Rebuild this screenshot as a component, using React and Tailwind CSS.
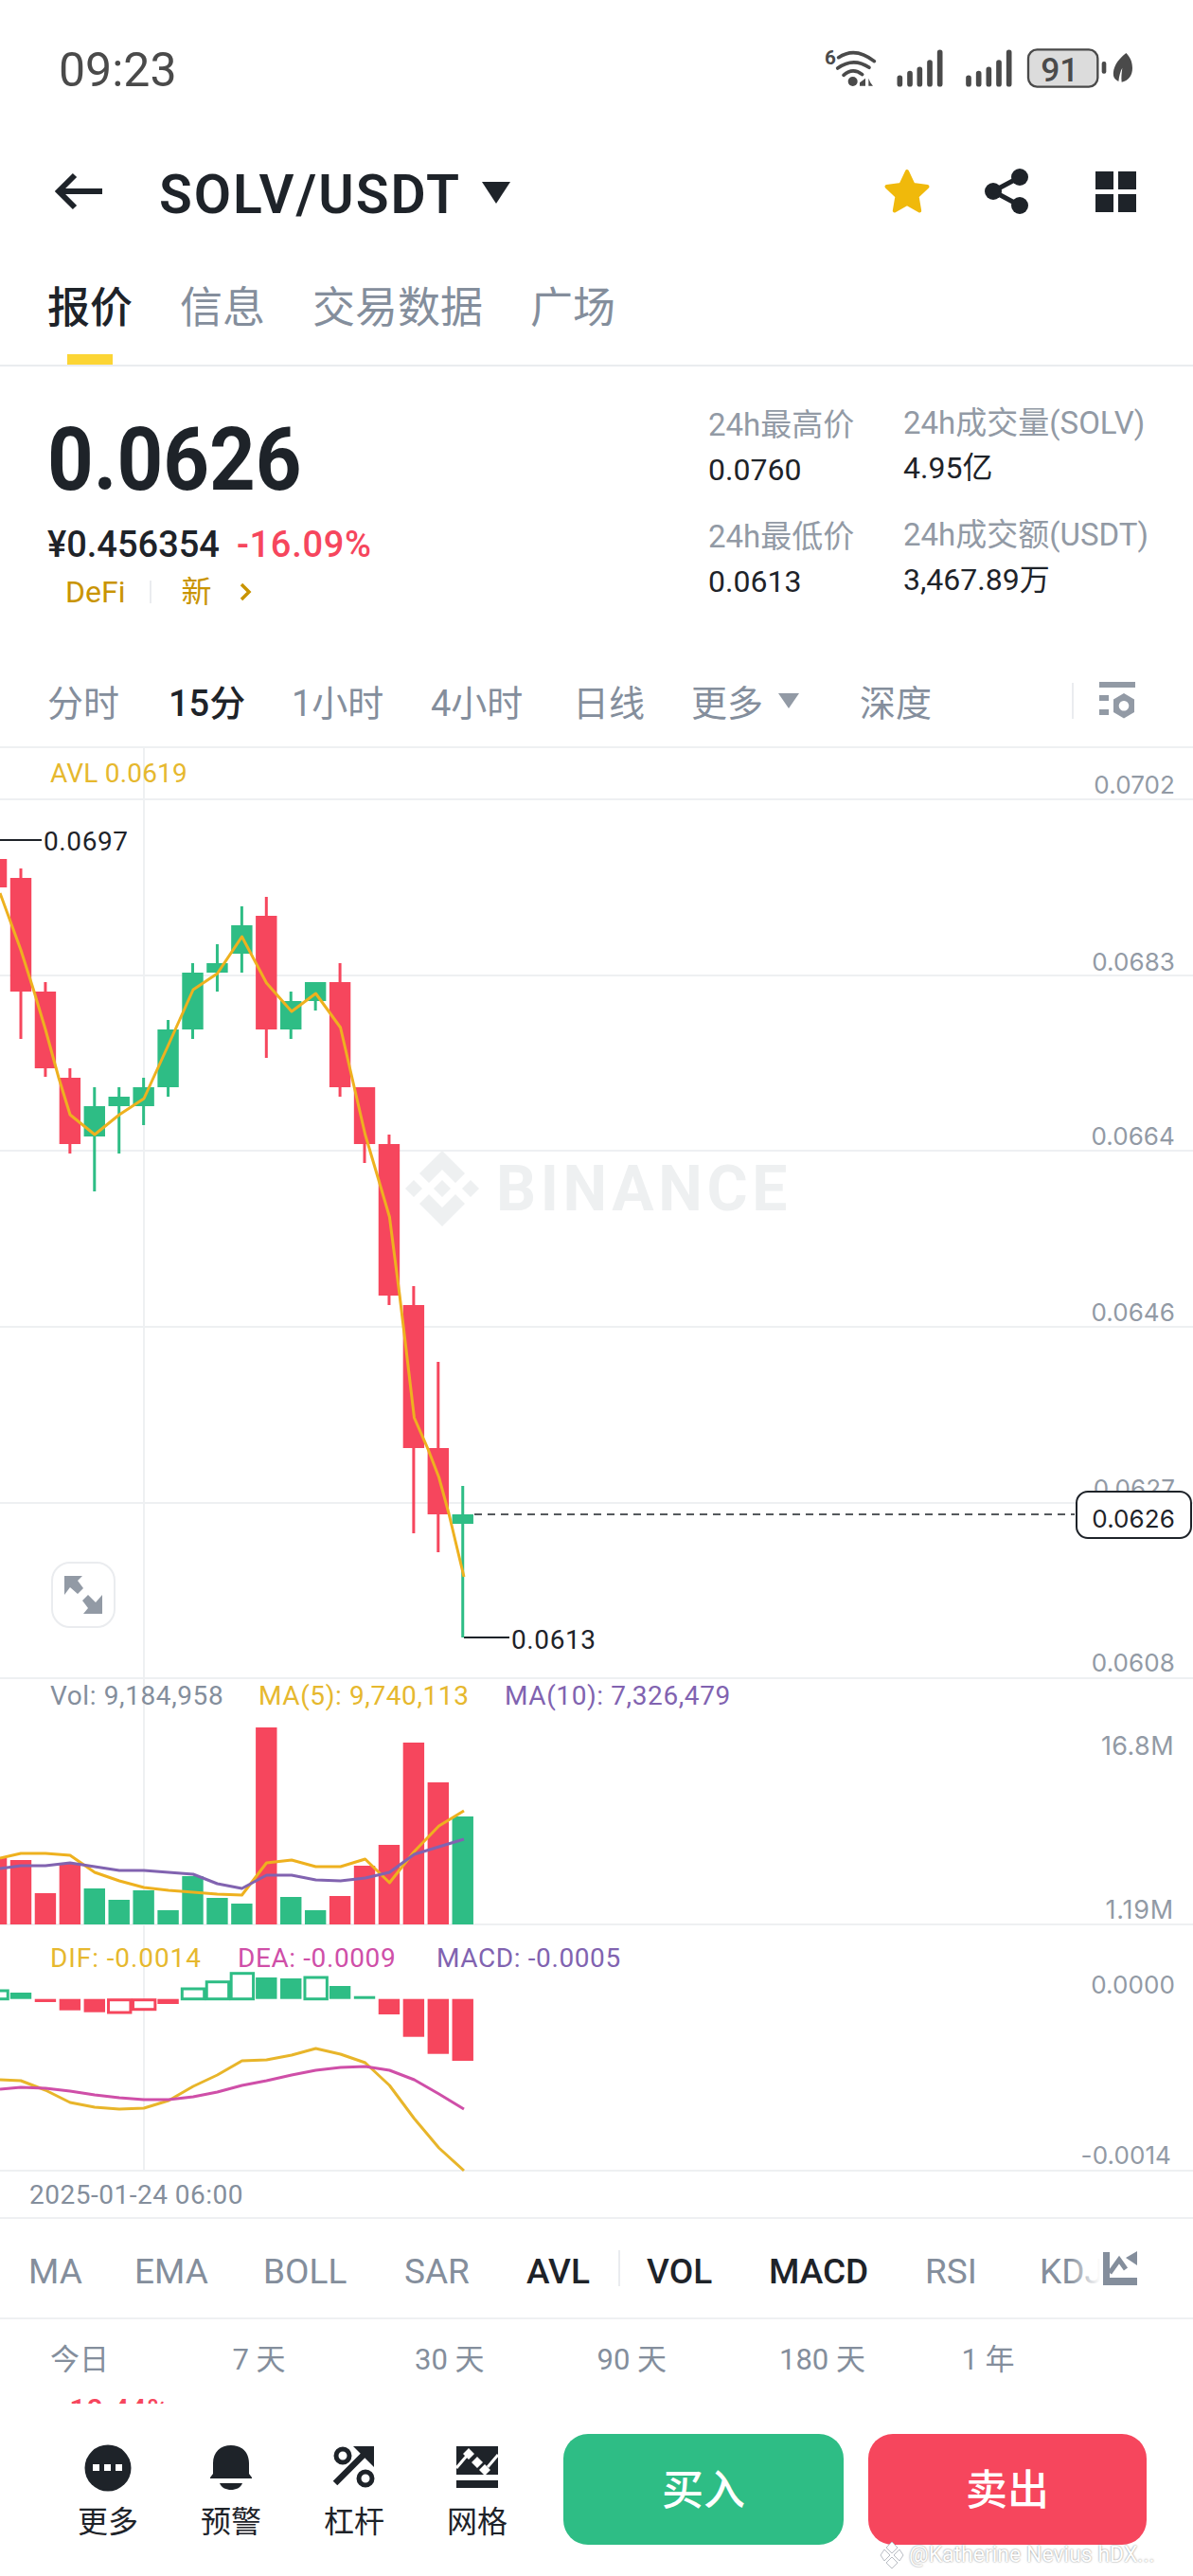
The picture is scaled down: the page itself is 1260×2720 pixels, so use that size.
import React from "react";

const RED = "#f6465d";
const GREEN = "#2ebd85";
const X = (i) => 22 + 25.93 * i;

const candles = [
  [-1, "r", 887, 907, 937, 937],
  [0, "r", 917, 927, 1047, 1097],
  [1, "r", 1037, 1047, 1128, 1137],
  [2, "r", 1128, 1138, 1208, 1218],
  [3, "g", 1148, 1168, 1200, 1258],
  [4, "g", 1148, 1158, 1168, 1218],
  [5, "g", 1138, 1148, 1168, 1188],
  [6, "g", 1077, 1087, 1148, 1158],
  [7, "g", 1017, 1027, 1087, 1097],
  [8, "g", 997, 1017, 1027, 1047],
  [9, "g", 957, 977, 1007, 1027],
  [10, "r", 947, 967, 1087, 1117],
  [11, "g", 1047, 1057, 1087, 1097],
  [12, "g", 1037, 1037, 1057, 1067],
  [13, "r", 1017, 1037, 1148, 1158],
  [14, "r", 1148, 1148, 1208, 1228],
  [15, "r", 1198, 1208, 1368, 1378],
  [16, "r", 1358, 1378, 1529, 1619],
  [17, "r", 1438, 1529, 1599, 1639],
  [18, "g", 1569, 1599, 1609, 1729],
];

const avl = "0,943 22,1003 36,1047 48,1087 62,1138 74,1177 100,1198 126,1177 152,1160 178,1103 204,1045 229.5,1028 255.5,989 281.5,1038 308,1068 333.5,1049 359.6,1085 385.7,1198 402,1253 411.4,1285 422,1367 428,1417 437.5,1497 452,1530 463.6,1560 474,1598 490,1665";

const vols = [
  [-1, "r", 1962], [0, "r", 1964], [1, "r", 1999], [2, "r", 1968], [3, "g", 1994],
  [4, "g", 2006], [5, "g", 1996], [6, "g", 2017], [7, "g", 1981], [8, "g", 2004],
  [9, "g", 2010], [10, "r", 1824], [11, "g", 2003], [12, "g", 2017], [13, "r", 2002],
  [14, "r", 1970], [15, "r", 1948], [16, "r", 1840], [17, "r", 1882], [18, "g", 1918],
];

const ma5 = "0,1962 22,1957 48,1957 74,1959 100,1977 126,1986 152,1993 178,1996 204,1998 229.5,2000 255.5,2001 281.5,1967 308,1964 333.5,1971 359.6,1971 385.7,1963 411.4,1988 437.5,1955 463.6,1928 490,1912";
const ma10 = "0,1973 22,1970 48,1970 74,1967 100,1971 126,1975 152,1975 178,1977 204,1979 229.5,1989 255.5,1994 281.5,1980 308,1980 333.5,1985 359.6,1986 385.7,1983 411.4,1977 437.5,1958 463.6,1950 490,1942";
const dif = "0,2196 22,2197 48,2207 74,2220 100,2225 126,2227 152,2226 178,2218 204,2203 229.5,2191 255.5,2176 281.5,2175 308,2170 333.5,2163 359.6,2169 385.7,2178 411.4,2202 437.5,2237 463.6,2268 490,2292";
const dea = "0,2206 22,2204 48,2205 74,2208 100,2212 126,2215 152,2217 178,2217 204,2214 229.5,2209 255.5,2202 281.5,2197 308,2191 333.5,2186 359.6,2183 385.7,2182 411.4,2186 437.5,2196 463.6,2211 490,2227";

const BASE = 2110.7;
const macd = [
  [-1, "g", 2101, true], [0, "g", 2104, false], [1, "r", 2114, false], [2, "r", 2122.7, false],
  [3, "r", 2124.7, false], [4, "r", 2125, true], [5, "r", 2121.7, true], [6, "r", 2116, false],
  [7, "g", 2099, true], [8, "g", 2091.7, true], [9, "g", 2082.7, true], [10, "g", 2088, false],
  [11, "g", 2089, false], [12, "g", 2087, true], [13, "g", 2097, false], [14, "g", 2107.7, false],
  [15, "r", 2127, false], [16, "r", 2150.7, false], [17, "r", 2168.7, false], [18, "r", 2176, false],
];

const axis = [
  ["0.0702", 838], ["0.0683", 1025], ["0.0664", 1209], ["0.0646", 1395], ["0.0627", 1581],
  ["0.0608", 1765], ["0.0000", 2105],
];

const Chart = () => (
  <svg className="absolute inset-0 h-full w-full" viewBox="0 788 1260 1553">
    {[844, 1030, 1215, 1401, 1587, 1772, 2032, 2292].map((y) => (
      <line key={y} x1="0" x2="1260" y1={y} y2={y} stroke="#eef0f2" strokeWidth="2" />
    ))}
    <line x1="0" x2="1260" y1="789" y2="789" stroke="#eef0f2" strokeWidth="2" />
    <line x1="152" x2="152" y1="788" y2="2292" stroke="#eef0f2" strokeWidth="2" />

    <g fill="#eef0f1">
      <path d="M467 1215 491 1239 481 1249 467 1235 453 1249 443 1239Z" />
      <path d="M467 1295 491 1271 481 1261 467 1275 453 1261 443 1271Z" />
      <path d="M467 1246 476 1255 467 1264 458 1255Z" />
      <path d="M437 1246 446 1255 437 1264 428 1255Z" />
      <path d="M497 1246 506 1255 497 1264 488 1255Z" />
    </g>
    <text x="524" y="1278" fill="#eef0f1" fontSize="66" fontWeight="700" letterSpacing="4.6" fontFamily="Roboto, sans-serif">BINANCE</text>

    <g fontFamily="Inter, sans-serif" fontSize="26" letterSpacing="0.1" fill="#929aa5" textAnchor="end">
      {axis.map(([t, y]) => (
        <text key={t} x="1241" y={y}>{t}</text>
      ))}
      <text x="1240" y="1853" fontSize="27" letterSpacing="0.4">16.8M</text>
      <text x="1240" y="2026" fontSize="27" letterSpacing="0.8">1.19M</text>
      <text x="1237" y="2285">-0.0014</text>
    </g>

    <line x1="0" x2="44" y1="887" y2="887" stroke="#1e2329" strokeWidth="2" />
    <text x="46" y="898" fill="#1e2329" fontSize="28" fontFamily="Roboto, sans-serif" letterSpacing="0.6">0.0697</text>
    <line x1="490" x2="538" y1="1729" y2="1729" stroke="#1e2329" strokeWidth="2" />
    <text x="540" y="1741" fill="#1e2329" fontSize="28" fontFamily="Roboto, sans-serif" letterSpacing="0.6">0.0613</text>

    {candles.map(([i, c, hi, top, bot, lo]) => (
      <g key={i} fill={c === "r" ? RED : GREEN}>
        <rect x={X(i) - 1.5} y={hi} width="3" height={lo - hi} />
        <rect x={X(i) - 11.2} y={top} width="22.4" height={bot - top} />
      </g>
    ))}
    <polyline points={avl} fill="none" stroke="#eeb11f" strokeWidth="3" strokeLinejoin="round" />

    <line x1="501" x2="1135" y1="1599" y2="1599" stroke="#1e2329" strokeWidth="1.6" strokeDasharray="8 6" />
    <rect x="1137" y="1575" width="121" height="49" rx="12" fill="#fff" stroke="#1e2329" strokeWidth="2" />
    <text x="1241" y="1613" fill="#1e2329" fontSize="26" letterSpacing="0.1" fontFamily="Inter, sans-serif" textAnchor="end">0.0626</text>

    {vols.map(([i, c, top]) => (
      <rect key={i} x={X(i) - 11.2} y={top} width="22.4" height={2032 - top} fill={c === "r" ? RED : GREEN} />
    ))}
    <polyline points={ma5} fill="none" stroke="#eeb11f" strokeWidth="3" strokeLinejoin="round" />
    <polyline points={ma10} fill="none" stroke="#8163b0" strokeWidth="3" strokeLinejoin="round" />

    {macd.map(([i, c, v, hollow]) => {
      const col = c === "r" ? RED : GREEN;
      const y = Math.min(v, BASE);
      const h = Math.abs(v - BASE);
      return hollow ? (
        <rect key={i} x={X(i) - 11.2} y={y + 1} width="23.4" height={Math.max(h - 1, 1)} fill="#fff" stroke={col} strokeWidth="3" />
      ) : (
        <rect key={i} x={X(i) - 11.2} y={y} width="22.4" height={h} fill={col} />
      );
    })}
    <polyline points={dif} fill="none" stroke="#e8b52a" strokeWidth="3" strokeLinejoin="round" />
    <polyline points={dea} fill="none" stroke="#cf4fa8" strokeWidth="3" strokeLinejoin="round" />
  </svg>
);

const StatusIcons = () => (
  <svg width="330" height="44" viewBox="90 60 990 132">
    <text x="93" y="114" fontSize="62" fontWeight="700" fill="#4a4a4a" fontFamily="Roboto, sans-serif">6</text>
    <g fill="none" stroke="#4a4a4a" strokeWidth="11" strokeLinecap="round">
      <path d="M137 92Q190 56 250 104" />
      <path d="M134 126Q184 90 234 124" />
      <path d="M153 148Q182 122 212 146" />
    </g>
    <circle cx="182" cy="168" r="15" fill="#4a4a4a" />
    <path d="M204 172 222 158V182H204ZM232 158V182H246L238 172Z" fill="#4a4a4a" />
    <g stroke="#4a4a4a" strokeWidth="17" strokeLinecap="round">
      <path d="M331 157V176M363 143V176M394 130V176M426 108V176M458 76V176" />
      <path d="M549 157V176M581 143V176M613 130V176M645 108V176M677 76V176" />
    </g>
    <rect x="738" y="67" width="220" height="118" rx="28" fill="#dcdcdc" stroke="#4a4a4a" strokeWidth="7" />
    <text x="838" y="168" fontSize="106" fontWeight="500" fill="#4a4a4a" textAnchor="middle" fontFamily="Roboto, sans-serif">91</text>
    <rect x="971" y="105" width="14" height="38" rx="6" fill="#4a4a4a" />
    <path d="M1048 78C1020 100 1005 125 1008 150 1010 160 1018 165 1024 168 1026 150 1030 135 1036 125 1034 140 1032 155 1034 170 1055 165 1068 150 1068 125 1068 105 1060 90 1048 78Z" fill="#4a4a4a" />
  </svg>
);

const BackArrow = () => (
  <svg width="50" height="40" viewBox="0 0 50 40" fill="none" stroke="#1e2329" strokeWidth="6">
    <path d="M50 20H5" />
    <path d="M21 3 4 20 21 37" />
  </svg>
);

const Star = () => (
  <svg width="50" height="48" viewBox="0 0 50 48">
    <path d="M25 3 31.6 17 46.5 19 35.6 29.4 38.2 44.5 25 37 11.8 44.5 14.4 29.4 3.5 19 18.4 17Z" fill="#f0b90b" stroke="#f0b90b" strokeWidth="4" strokeLinejoin="round" />
  </svg>
);

const Share = () => (
  <svg width="46" height="48" viewBox="0 0 46 48" fill="#1e2329">
    <circle cx="9" cy="24" r="9" />
    <circle cx="37" cy="9" r="9" />
    <circle cx="37" cy="39" r="9" />
    <path d="M9 24 37 9M9 24 37 39" stroke="#1e2329" strokeWidth="5" />
  </svg>
);

const GridIcon = () => (
  <svg width="43" height="43" viewBox="0 0 43 43" fill="#1e2329">
    <rect width="19" height="19" />
    <rect x="24" width="19" height="19" />
    <rect y="24" width="19" height="19" />
    <rect x="24" y="24" width="19" height="19" />
  </svg>
);

const SettingsIcon = () => (
  <svg width="38" height="40" viewBox="0 0 38 40" fill="#929aa5">
    <rect width="38" height="6" />
    <rect y="14" width="10" height="6" />
    <rect y="29" width="10" height="6" />
    <path fillRule="evenodd" d="M26 12 37 18.5V32L26 38.5 15 32V18.5ZM26 20a5.3 5.3 0 1 0 .01 0Z" />
  </svg>
);

const IndicatorIcon = () => (
  <svg width="36" height="36" viewBox="0 0 36 36" fill="#848e9c">
    <path d="M0 1H7V28H36V36H0Z" />
    <path d="M7 23 17 9 24 19" fill="none" stroke="#848e9c" strokeWidth="5" />
    <path d="M36 0V15L24 7Z" />
  </svg>
);

const MoreIcon = () => (
  <svg width="50" height="50" viewBox="0 0 50 50">
    <circle cx="25" cy="25" r="24.5" fill="#1e2329" />
    <path d="M9 21h7v7H9zM21 21h7v7h-7zM33 21h7v7h-7z" fill="#fff" />
  </svg>
);

const BellIcon = () => (
  <svg width="50" height="50" viewBox="0 0 50 50" fill="#1e2329">
    <path d="M3 35 6 31V20C6 8 14 1 25 1S44 8 44 20V31L47 35V36H3Z" />
    <path d="M13 41H37C35 46 30 48 25 48S15 46 13 41Z" />
  </svg>
);

const PercentIcon = () => (
  <svg width="50" height="50" viewBox="0 0 50 50">
    <circle cx="13" cy="12" r="7" fill="none" stroke="#1e2329" strokeWidth="5" />
    <circle cx="37" cy="36" r="7" fill="none" stroke="#1e2329" strokeWidth="5" />
    <path d="M5 41 35 11" stroke="#1e2329" strokeWidth="6.5" fill="none" />
    <path d="M24 2H46V24Z" fill="#1e2329" />
  </svg>
);

const GridTradeIcon = () => (
  <svg width="50" height="50" viewBox="0 0 50 50">
    <path d="M3 2H47V32H3ZM3 38H47V46H3Z" fill="#1e2329" />
    <path d="M3 25 14 12M36 24 47 11" fill="none" stroke="#fff" strokeWidth="3" />
    <path d="M16 4 22 10 16 16 10 10ZM25 13 31 19 25 25 19 19ZM33 21 39 27 33 33 27 27Z" fill="#fff" />
  </svg>
);

const Expand = () => (
  <svg width="40" height="40" viewBox="0 0 40 40" fill="#929aa5">
    <path d="M0 0H19L14 5 20 13 14 19 6 12 0 20Z" />
    <path d="M40 40H20L25 34 19 26 25 20 33 28 40 20Z" />
  </svg>
);

const WatermarkLogo = () => (
  <svg width="26" height="30" viewBox="0 0 26 30" fill="#fff" stroke="#b9bdc4" strokeWidth="1">
    <path d="M13 1 19 7 13 13 7 7Z" />
    <path d="M5 9 11 15 5 21 1 15Z" />
    <path d="M21 9 25 15 21 21 15 15Z" />
    <path d="M13 17 19 23 13 29 7 23Z" />
  </svg>
);

const timeframes = [
  ["分时", "w-[128px] text-[#848e9c]"],
  ["15分", "w-[130px] text-[#1e2329] font-medium"],
  ["1小时", "w-[147px] text-[#848e9c]"],
  ["4小时", "w-[150px] text-[#848e9c]"],
  ["日线", "w-[125px] text-[#848e9c]"],
  ["更多", "w-[92px] text-[#848e9c]"],
];

const indicators = [
  ["MA", "w-[112px] text-[#848e9c]"],
  ["EMA", "w-[136px] text-[#848e9c]"],
  ["BOLL", "w-[149px] text-[#848e9c]"],
  ["SAR", "w-[129px] text-[#848e9c]"],
  ["AVL", "w-[97px] text-[#1e2329] font-medium"],
];
const indicators2 = [
  ["VOL", "w-[129px] text-[#1e2329] font-medium"],
  ["MACD", "w-[165px] text-[#1e2329] font-medium"],
  ["RSI", "w-[121px] text-[#848e9c]"],
];

const periods = ["今日", "7 天", "30 天", "90 天", "180 天", "1 年"];

const tools = [
  ["更多", <MoreIcon key="a" />],
  ["预警", <BellIcon key="b" />],
  ["杠杆", <PercentIcon key="c" />],
  ["网格", <GridTradeIcon key="d" />],
];

const Stat = ({ label, value, gapClass }) => (
  <div className={gapClass}>
    <div className="text-[33px] leading-[40px] text-[#929aa5] whitespace-nowrap">{label}</div>
    <div className="mt-[7px] text-[32px] leading-[40px] text-[#1e2329] whitespace-nowrap">{value}</div>
  </div>
);

export default function App() {
  return (
    <div className="relative h-[2720px] w-[1260px] overflow-hidden bg-white font-['Roboto','Noto_Sans_CJK_SC',sans-serif]">
      <div className="flex h-[144px] items-center justify-between pl-[62px] pr-[60px]">
        <span className="pt-[3px] text-[50px] leading-none text-[#4a4a4a]">09:23</span>
        <StatusIcons />
      </div>

      <div className="flex h-[116px] items-center pl-[58px] pr-[60px]">
        <BackArrow />
        <span className="ml-[60px] pt-[6px] text-[57px] font-semibold leading-none tracking-[2px] text-[#1e2329]">SOLV/USDT</span>
        <span className="ml-[22px] mt-[2px] h-0 w-0 border-x-[15px] border-t-[23px] border-x-transparent border-t-[#1e2329]" />
        <div className="ml-auto flex items-center">
          <Star />
          <div className="ml-[57px]"><Share /></div>
          <div className="ml-[71px]"><GridIcon /></div>
        </div>
      </div>

      <div className="flex h-[127px] gap-[50px] border-b-2 border-[#eaecef] pl-[50px]">
        <div className="flex flex-col items-center">
          <span className="mt-[38px] text-[45px] leading-[56px] font-medium text-[#1e2329]">报价</span>
          <span className="mt-auto h-[11px] w-[48px] bg-[#fcd535]" />
        </div>
        <span className="mt-[38px] text-[45px] leading-[56px] text-[#848e9c]">信息</span>
        <span className="mt-[38px] text-[45px] leading-[56px] text-[#848e9c]">交易数据</span>
        <span className="mt-[38px] text-[45px] leading-[56px] text-[#848e9c]">广场</span>
      </div>

      <div className="flex h-[313px]">
        <div className="w-[748px] pl-[50px] pt-[55px]">
          <div className="origin-left scale-y-[1.08] text-[85px] font-bold leading-[88px] text-[#1e2329]">0.0626</div>
          <div className="mt-[23px] flex text-[38px] font-medium leading-[44px]">
            <span className="text-[#1e2329]">¥0.456354</span>
            <span className="ml-[18px] tracking-[0.7px] text-[#f6465d]">-16.09%</span>
          </div>
          <div className="ml-[19px] mt-[8px] flex h-[40px] items-center text-[32px] text-[#c99400]">
            <span>DeFi</span>
            <span className="ml-[26px] h-[24px] w-[2px] bg-[#eaecef]" />
            <span className="ml-[31px]">新</span>
            <svg className="ml-[29px]" width="14" height="22" viewBox="0 0 14 22" fill="none" stroke="#c99400" strokeWidth="3.5">
              <path d="M3 3 11 11 3 19" />
            </svg>
          </div>
        </div>
        <div className="w-[206px] pt-[42px]">
          <Stat label="24h最高价" value="0.0760" />
          <Stat label="24h最低价" value="0.0613" gapClass="mt-[31px]" />
        </div>
        <div className="pt-[40px]">
          <Stat label="24h成交量(SOLV)" value="4.95亿" />
          <Stat label="24h成交额(USDT)" value="3,467.89万" gapClass="mt-[31px]" />
        </div>
      </div>

      <div className="flex h-[88px] items-center pb-[2px] pl-[50px] text-[38px] leading-none">
        {timeframes.map(([t, c]) => (
          <span key={t} className={c}>{t}</span>
        ))}
        <span className="mb-[6px] h-0 w-0 border-x-[11px] border-t-[16px] border-x-transparent border-t-[#929aa5]" />
        <span className="ml-[64px] text-[#848e9c]">深度</span>
        <span className="mb-[6px] ml-[148px] h-[38px] w-[2px] bg-[#eaecef]" />
        <div className="mb-[6px] ml-[27px]"><SettingsIcon /></div>
      </div>

      <div className="relative h-[1553px]">
        <Chart />
        <div className="absolute left-[53px] top-[14px] text-[28px] leading-[30px] tracking-[0.2px] text-[#e6b82e]">AVL 0.0619</div>
        <div className="absolute left-[53px] top-[988px] flex text-[28px] leading-[30px] tracking-[0.6px] whitespace-nowrap">
          <span className="w-[220px] text-[#848e9c]">Vol: 9,184,958</span>
          <span className="w-[260px] text-[#e6b82e]">MA(5): 9,740,113</span>
          <span className="text-[#8163b0]">MA(10): 7,326,479</span>
        </div>
        <div className="absolute left-[53px] top-[1265px] flex text-[28px] leading-[30px] tracking-[0.6px] whitespace-nowrap">
          <span className="w-[198px] tracking-[0.9px] text-[#e6b82e]">DIF: -0.0014</span>
          <span className="w-[210px] text-[#cf4fa8]">DEA: -0.0009</span>
          <span className="text-[#8163b0]">MACD: -0.0005</span>
        </div>
        <div className="absolute left-[31px] top-[1515px] text-[28px] leading-[30px] tracking-[0.5px] text-[#848e9c]">2025-01-24 06:00</div>
        <div className="absolute left-[54px] top-[861px] flex h-[70px] w-[68px] items-center justify-center rounded-[20px] border-2 border-[#eaecef] bg-white">
          <Expand />
        </div>
      </div>

      <div className="relative flex h-[108px] items-center overflow-hidden border-y-2 border-[#eef0f2] pl-[30px] text-[37px] leading-none">
        {indicators.map(([t, c]) => (
          <span key={t} className={`${c} pt-[7px]`}>{t}</span>
        ))}
        <span className="h-[38px] w-[2px] bg-[#eaecef]" />
        <span className="w-[28px]" />
        {indicators2.map(([t, c]) => (
          <span key={t} className={`${c} pt-[7px]`}>{t}</span>
        ))}
        <span className="pt-[7px] text-[#848e9c]">KDJ</span>
        <div className="absolute right-0 top-0 flex h-full w-[130px] items-center bg-[linear-gradient(to_right,transparent_0,white_32px)] pl-[35px]">
          <IndicatorIcon />
        </div>
      </div>

      <div className="h-[89px] overflow-hidden pl-[53px] pt-[23px]">
        <div className="flex text-[31px] leading-[40px] text-[#848e9c]">
          {periods.map((p) => (
            <span key={p} className="w-[192.5px]">{p}</span>
          ))}
        </div>
        <div className="ml-[9px] mt-[13px] text-[31px] font-medium leading-[40px] tracking-[0.6px] text-[#f6465d]">-10.44%</div>
      </div>

      <div className="flex h-[182px] pl-[49px] pt-[32px]">
        <div className="flex">
          {tools.map(([t, icon]) => (
            <div key={t} className="flex w-[130px] flex-col items-center pt-[11px]">
              {icon}
              <span className="mt-[12px] text-[32px] leading-[40px] text-[#1e2329]">{t}</span>
            </div>
          ))}
        </div>
        <div className="ml-[26px] flex h-[117px] w-[296px] items-center justify-center rounded-[26px] bg-[#2ebd85] pt-[3px] text-[44px] font-medium text-white">买入</div>
        <div className="ml-[26px] flex h-[117px] w-[294px] items-center justify-center rounded-[26px] bg-[#f6465d] pt-[3px] text-[44px] font-medium text-white">卖出</div>
      </div>

      <div className="absolute left-[929px] top-[2683px] flex items-center gap-[5px] text-[23px] leading-[30px] text-white [text-shadow:0_0_2px_#777]">
        <WatermarkLogo />
        <span className="whitespace-nowrap">@Katherine Nevius hDX...</span>
      </div>
    </div>
  );
}
